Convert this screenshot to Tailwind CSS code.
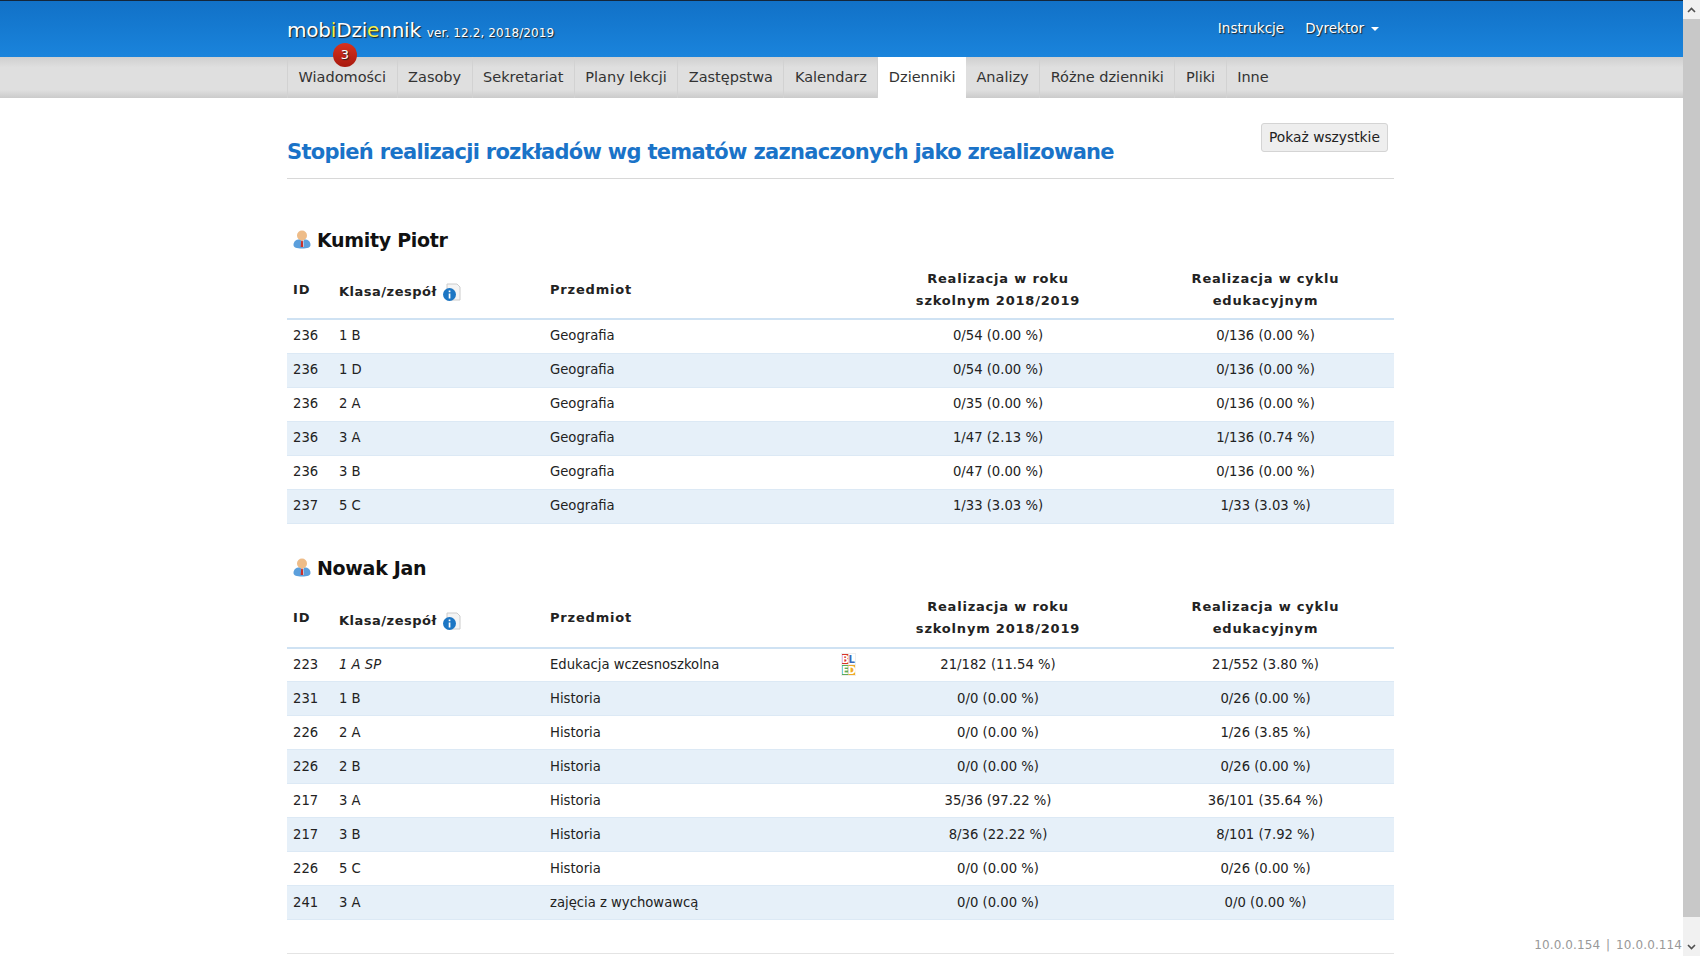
<!DOCTYPE html>
<html lang="pl">
<head>
    <meta charset="UTF-8">
    <title>mobiDziennik</title>
    <script src="https://cdn.jsdelivr.net/npm/@tailwindcss/browser@4"></script>
</head>
<body class="bg-white text-[#222] font-['DejaVu_Sans',sans-serif] h-[956px] overflow-hidden relative">
    <!-- top bar -->
    <header class="h-[57px] border-t border-[#14263a] bg-gradient-to-b from-[#1171c7] to-[#1a84dc] pl-[287px] pr-[321px] flex items-center justify-between text-white [text-shadow:1px_1px_1px_#222]">
        <div class="flex items-baseline gap-[6px] mt-[1px]">
            <a class="text-[20px] tracking-[-0.2px]">mob<span class="text-[#f5ee4a]">i</span>Dzi<span class="text-[#f5ee4a]">e</span>nnik</a>
            <span class="text-[12px] tracking-[0.1px]">ver. 12.2, 2018/2019</span>
        </div>
        <div class="flex items-center gap-[21px] text-[13.5px] mb-[1px]">
            <a>Instrukcje</a>
            <a class="flex items-center gap-[7px]">Dyrektor <span class="w-0 h-0 border-x-[4px] border-x-transparent border-t-[4px] border-t-white"></span></a>
        </div>
    </header>

    <!-- main menu -->
    <nav class="h-[41px] mr-[17px] pl-[287px] flex bg-[linear-gradient(#cfcfcf,#dfdfdf_25%,#dfdfdf_80%,#cbcbcb)] text-[14.5px] text-[#333]">
        <a class="relative flex items-center px-[10.5px] border-x border-[#d2d2d2]">Wiadomości
            <span class="absolute left-[45px] top-[-14px] w-[24px] h-[24px] rounded-full bg-gradient-to-b from-[#d8321f] to-[#a8180e] text-white text-[13px] flex items-center justify-center [text-shadow:1px_1px_1px_#222]">3</span>
        </a>
        <a class="flex items-center px-[10.5px] border-r border-[#d2d2d2]">Zasoby</a>
        <a class="flex items-center px-[10.5px] border-r border-[#d2d2d2]">Sekretariat</a>
        <a class="flex items-center px-[10.5px] border-r border-[#d2d2d2]">Plany lekcji</a>
        <a class="flex items-center px-[10.5px] border-r border-[#d2d2d2]">Zastępstwa</a>
        <a class="flex items-center px-[10.5px] border-r border-[#d2d2d2]">Kalendarz</a>
        <a class="flex items-center px-[10.5px] bg-white">Dzienniki</a>
        <a class="flex items-center px-[10.5px] border-r border-[#d2d2d2]">Analizy</a>
        <a class="flex items-center px-[10.5px] border-r border-[#d2d2d2]">Różne dzienniki</a>
        <a class="flex items-center px-[10.5px] border-r border-[#d2d2d2]">Pliki</a>
        <a class="flex items-center px-[10.5px]">Inne</a>
    </nav>

    <main class="ml-[287px] w-[1107px] text-[13px]">
        <div class="h-[81px] border-b border-[#d8d8d8] flex items-start justify-between pr-[6px]">
            <h1 class="text-[21px] tracking-[-0.7px] font-bold text-[#1a73c8] mt-[39px] leading-[30px]">Stopień realizacji rozkładów wg tematów zaznaczonych jako zrealizowane</h1>
            <button class="mt-[25px] h-[29px] w-[127px] bg-[#eeeeee] border border-[#d4d4d4] rounded-[3px] text-[13.8px] text-[#222]">Pokaż wszystkie</button>
        </div>

        <h2 class="mt-[47px] h-[28px] flex items-center gap-[6px] pl-[6px] text-[19px] tracking-[-0.3px] font-bold text-[#111]">
            <svg class="w-[18px] h-[19px] mb-[2px]" viewBox="0 0 18 19"><path d="M0.5 15c0-4 3-6 8.5-6s8.500 2 8.500 6c0 2.500-3 3.500-8.500 3.500S0.500 17.500 0.500 15z" fill="#5b9fdc"/><path d="M6.500 9h5l-1.200 2 .5 6H8.200l.5-6z" fill="#fff"/><path d="M8.200 10.500h1.600l.5 6.500H7.700z" fill="#c8302a"/><ellipse cx="9" cy="5.500" rx="5" ry="5" fill="#eebc88"/></svg>
            Kumity Piotr
        </h2>
        <table class="mt-[9px] w-full table-fixed border-collapse">
            <colgroup><col class="w-[46px]"><col class="w-[217px]"><col class="w-[309px]"><col class="w-[278px]"><col class="w-[257px]"></colgroup>
            <thead>
                <tr class="h-[56px] border-b-2 border-[#cfe2f3] font-bold tracking-[0.8px]">
                    <th class="pl-[6px] pb-[2px] text-left">ID</th>
                    <th class="pl-[6px] pt-[3px] text-left tracking-[0.5px]"><span class="inline-flex items-center gap-[6px]">Klasa/zespół
                        <svg class="w-[18px] h-[18px]" viewBox="0 0 18 18"><path d="M4 1h10l3 3v13H4z" fill="#f4f4f4" stroke="#ccc"/><circle cx="6.500" cy="11.500" r="6.500" fill="#1c76c4"/><rect x="5.700" y="10.500" width="1.700" height="5" fill="#fff"/><rect x="5.700" y="7.500" width="1.700" height="1.700" fill="#fff"/></svg></span></th>
                    <th class="text-left pl-0 pb-[2px]">Przedmiot</th>
                    <th class="leading-[22px] pb-[2px]">Realizacja w roku<br>szkolnym 2018/2019</th>
                    <th class="leading-[22px] pb-[2px]">Realizacja w cyklu<br>edukacyjnym</th>
                </tr>
            </thead>
            <tbody class="text-center text-[13.2px]">
                <tr class="h-[34px] border-b border-[#dce9f5]"><td class="pl-[6px] text-left">236</td><td class="pl-[6px] text-left">1 B</td><td class="text-left">Geografia</td><td>0/54 (0.00 %)</td><td>0/136 (0.00 %)</td></tr>
                <tr class="h-[34px] border-b border-[#dce9f5] bg-[#e6f0f9]"><td class="pl-[6px] text-left">236</td><td class="pl-[6px] text-left">1 D</td><td class="text-left">Geografia</td><td>0/54 (0.00 %)</td><td>0/136 (0.00 %)</td></tr>
                <tr class="h-[34px] border-b border-[#dce9f5]"><td class="pl-[6px] text-left">236</td><td class="pl-[6px] text-left">2 A</td><td class="text-left">Geografia</td><td>0/35 (0.00 %)</td><td>0/136 (0.00 %)</td></tr>
                <tr class="h-[34px] border-b border-[#dce9f5] bg-[#e6f0f9]"><td class="pl-[6px] text-left">236</td><td class="pl-[6px] text-left">3 A</td><td class="text-left">Geografia</td><td>1/47 (2.13 %)</td><td>1/136 (0.74 %)</td></tr>
                <tr class="h-[34px] border-b border-[#dce9f5]"><td class="pl-[6px] text-left">236</td><td class="pl-[6px] text-left">3 B</td><td class="text-left">Geografia</td><td>0/47 (0.00 %)</td><td>0/136 (0.00 %)</td></tr>
                <tr class="h-[34px] border-b border-[#dce9f5] bg-[#e6f0f9]"><td class="pl-[6px] text-left">237</td><td class="pl-[6px] text-left">5 C</td><td class="text-left">Geografia</td><td>1/33 (3.03 %)</td><td>1/33 (3.03 %)</td></tr>
            </tbody>
        </table>

        <h2 class="mt-[31px] h-[28px] flex items-center gap-[6px] pl-[6px] text-[19px] tracking-[-0.3px] font-bold text-[#111]">
            <svg class="w-[18px] h-[19px] mb-[2px]" viewBox="0 0 18 19"><path d="M0.5 15c0-4 3-6 8.5-6s8.500 2 8.500 6c0 2.500-3 3.500-8.500 3.500S0.500 17.500 0.500 15z" fill="#5b9fdc"/><path d="M6.500 9h5l-1.200 2 .5 6H8.200l.5-6z" fill="#fff"/><path d="M8.200 10.500h1.600l.5 6.500H7.700z" fill="#c8302a"/><ellipse cx="9" cy="5.500" rx="5" ry="5" fill="#eebc88"/></svg>
            Nowak Jan
        </h2>
        <table class="mt-[9px] w-full table-fixed border-collapse">
            <colgroup><col class="w-[46px]"><col class="w-[217px]"><col class="w-[309px]"><col class="w-[278px]"><col class="w-[257px]"></colgroup>
            <thead>
                <tr class="h-[56px] border-b-2 border-[#cfe2f3] font-bold tracking-[0.8px]">
                    <th class="pl-[6px] pb-[2px] text-left">ID</th>
                    <th class="pl-[6px] pt-[3px] text-left tracking-[0.5px]"><span class="inline-flex items-center gap-[6px]">Klasa/zespół
                        <svg class="w-[18px] h-[18px]" viewBox="0 0 18 18"><path d="M4 1h10l3 3v13H4z" fill="#f4f4f4" stroke="#ccc"/><circle cx="6.500" cy="11.500" r="6.500" fill="#1c76c4"/><rect x="5.700" y="10.500" width="1.700" height="5" fill="#fff"/><rect x="5.700" y="7.500" width="1.700" height="1.700" fill="#fff"/></svg></span></th>
                    <th class="text-left pl-0 pb-[2px]">Przedmiot</th>
                    <th class="leading-[22px] pb-[2px]">Realizacja w roku<br>szkolnym 2018/2019</th>
                    <th class="leading-[22px] pb-[2px]">Realizacja w cyklu<br>edukacyjnym</th>
                </tr>
            </thead>
            <tbody class="text-center text-[13.2px]">
                <tr class="h-[34px] border-b border-[#dce9f5]"><td class="pl-[6px] text-left">223</td><td class="pl-[6px] text-left italic">1 A SP</td>
                    <td class="text-left"><div class="flex items-center justify-between pr-[3px]">Edukacja wczesnoszkolna
                        <svg class="w-[15px] h-[23px]" viewBox="0 0 15 23"><rect width="15" height="23" fill="#eee"/><rect x="1" y="1" width="6.500" height="10" fill="#d8352a"/><rect x="7.500" y="1" width="6.500" height="10" fill="#fff"/><rect x="1" y="12" width="6.500" height="10" fill="#5cab5c"/><rect x="7.500" y="12" width="6.500" height="10" fill="#f0a92a"/><text x="4.200" y="10" text-anchor="middle" font-size="10" font-weight="bold" fill="#fff">B</text><text x="10.800" y="10" text-anchor="middle" font-size="10" font-weight="bold" fill="#3a68b8">L</text><text x="4.200" y="21" text-anchor="middle" font-size="10" font-weight="bold" fill="#fff">E</text><text x="10.800" y="21" text-anchor="middle" font-size="10" font-weight="bold" fill="#fff">D</text></svg></div></td>
                    <td>21/182 (11.54 %)</td><td>21/552 (3.80 %)</td></tr>
                <tr class="h-[34px] border-b border-[#dce9f5] bg-[#e6f0f9]"><td class="pl-[6px] text-left">231</td><td class="pl-[6px] text-left">1 B</td><td class="text-left">Historia</td><td>0/0 (0.00 %)</td><td>0/26 (0.00 %)</td></tr>
                <tr class="h-[34px] border-b border-[#dce9f5]"><td class="pl-[6px] text-left">226</td><td class="pl-[6px] text-left">2 A</td><td class="text-left">Historia</td><td>0/0 (0.00 %)</td><td>1/26 (3.85 %)</td></tr>
                <tr class="h-[34px] border-b border-[#dce9f5] bg-[#e6f0f9]"><td class="pl-[6px] text-left">226</td><td class="pl-[6px] text-left">2 B</td><td class="text-left">Historia</td><td>0/0 (0.00 %)</td><td>0/26 (0.00 %)</td></tr>
                <tr class="h-[34px] border-b border-[#dce9f5]"><td class="pl-[6px] text-left">217</td><td class="pl-[6px] text-left">3 A</td><td class="text-left">Historia</td><td>35/36 (97.22 %)</td><td>36/101 (35.64 %)</td></tr>
                <tr class="h-[34px] border-b border-[#dce9f5] bg-[#e6f0f9]"><td class="pl-[6px] text-left">217</td><td class="pl-[6px] text-left">3 B</td><td class="text-left">Historia</td><td>8/36 (22.22 %)</td><td>8/101 (7.92 %)</td></tr>
                <tr class="h-[34px] border-b border-[#dce9f5]"><td class="pl-[6px] text-left">226</td><td class="pl-[6px] text-left">5 C</td><td class="text-left">Historia</td><td>0/0 (0.00 %)</td><td>0/26 (0.00 %)</td></tr>
                <tr class="h-[34px] border-b border-[#dce9f5] bg-[#e6f0f9]"><td class="pl-[6px] text-left">241</td><td class="pl-[6px] text-left">3 A</td><td class="text-left">zajęcia z wychowawcą</td><td>0/0 (0.00 %)</td><td>0/0 (0.00 %)</td></tr>
            </tbody>
        </table>
        <div class="mt-[33px] border-t border-[#e4e4e4]"></div>
    </main>

    <!-- ip info over the page corner -->
    <div class="absolute right-[18px] bottom-[2px] text-[12px] tracking-[0.1px] [word-spacing:2px] text-[#999]">10.0.0.154 | 10.0.0.114</div>

    <!-- window scrollbar -->
    <div class="absolute top-0 right-0 bottom-0 w-[17px] bg-[#f1f1f1] flex flex-col">
        <div class="h-[19px] flex items-center justify-center"><svg class="w-[9px] h-[6px]" viewBox="0 0 9 6"><path d="M1 5l3.500-3.500L8 5" fill="none" stroke="#505050" stroke-width="1.600"/></svg></div>
        <div class="h-[898px] bg-[#c8c8c8]"></div>
        <div class="flex-1 flex items-end justify-center pb-[6px]"><svg class="w-[9px] h-[6px]" viewBox="0 0 9 6"><path d="M1 1l3.500 3.500L8 1" fill="none" stroke="#505050" stroke-width="1.600"/></svg></div>
    </div>
</body>
</html>
